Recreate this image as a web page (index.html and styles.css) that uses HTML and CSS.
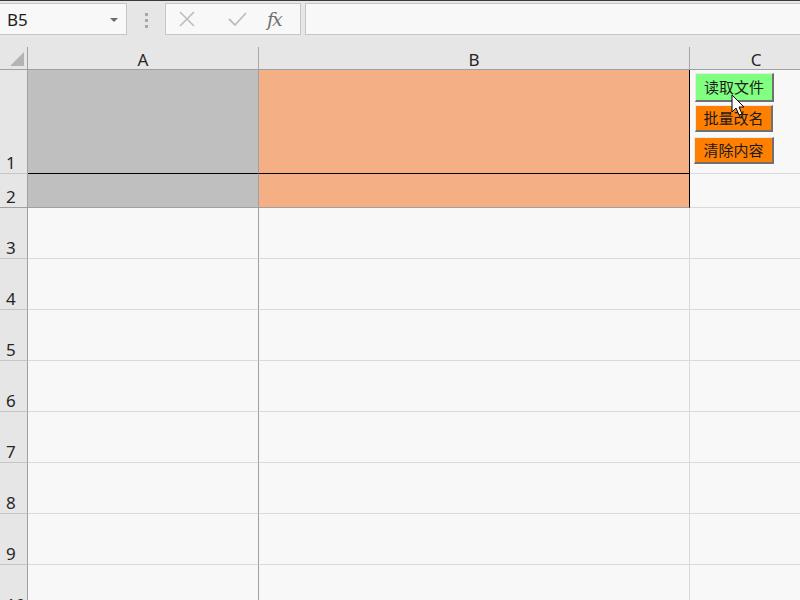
FILE: index.html
```
<!DOCTYPE html>
<html>
<head>
<meta charset="utf-8">
<link rel="stylesheet" href="styles.css">
</head>
<body>
<div class="app">
  <div class="fbar">
    <div class="namebox"><span class="ref">B5</span><span class="dd"></span></div>
    <div class="grip"><i></i><i></i><i></i></div>
    <div class="fbtns">
      <svg class="ic" width="20" height="20" viewBox="0 0 20 20"><path d="M3 3L17 17M17 3L3 17" stroke="#bdbdbd" stroke-width="1.6" fill="none"/></svg>
      <svg class="ic" width="20" height="20" viewBox="0 0 20 20"><path d="M2 10L8 16L19 4" stroke="#bdbdbd" stroke-width="1.8" fill="none"/></svg>
      <span class="fx">fx</span>
    </div>
    <div class="finput"></div>
  </div>
  <div class="sheet">
    <div class="corner"><span class="tri"></span></div>
    <div class="ch">A</div>
    <div class="ch">B</div>
    <div class="ch last">C</div>

    <div class="rh">1</div>
    <div class="c fa b1">&nbsp;</div>
    <div class="c fb b1 br1"></div>
    <div class="c"></div>

    <div class="rh dk">2</div>
    <div class="c fa b2"></div>
    <div class="c fb b2 br1"></div>
    <div class="c"></div>

    <div class="rh">3</div><div class="c ca"></div><div class="c"></div><div class="c"></div>
    <div class="rh">4</div><div class="c ca"></div><div class="c"></div><div class="c"></div>
    <div class="rh">5</div><div class="c ca"></div><div class="c"></div><div class="c"></div>
    <div class="rh">6</div><div class="c ca"></div><div class="c"></div><div class="c"></div>
    <div class="rh">7</div><div class="c ca"></div><div class="c"></div><div class="c"></div>
    <div class="rh">8</div><div class="c ca"></div><div class="c"></div><div class="c"></div>
    <div class="rh">9</div><div class="c ca"></div><div class="c"></div><div class="c"></div>
    <div class="rh">10</div><div class="c ca"></div><div class="c"></div><div class="c"></div>

    <div class="shapes">
      <div class="btn green">读取文件</div>
      <div class="btn orange b2nd">批量改名</div>
      <div class="btn orange b3rd">清除内容</div>
    </div>
    <svg class="cursor" width="16" height="24" viewBox="0 0 16 24"><path d="M1 1L1 18L5 14L8 21L11 20L8 13L13 13Z" fill="#fff" stroke="#000" stroke-width="1"/></svg>
  </div>
</div>
</body>
</html>
```
FILE: styles.css
```
html, body { margin: 0; padding: 0; }
body {
  width: 800px; height: 600px; overflow: hidden;
  background: #e6e6e6;
  font-family: "Noto Sans", "Noto Sans CJK SC", sans-serif;
}
.app { width: 800px; height: 600px; overflow: hidden; border-top: 1px solid #3a3a3a; box-sizing: border-box; }
.fbar {
  height: 46px; box-sizing: border-box; padding-top: 2px;
  display: flex; align-items: flex-start;
}
.namebox {
  width: 127px; height: 32px; box-sizing: border-box;
  background: #f8f8f8; border: 1px solid #c6c6c6; border-left: none;
  display: flex; align-items: center; justify-content: space-between;
  padding: 0 8px 0 7px;
}
.ref { font-size: 17px; color: #1e1e1e; }
.dd { width: 0; height: 0; border-left: 4px solid transparent; border-right: 4px solid transparent; border-top: 4px solid #6a6a6a; margin-top: 2px; }
.grip { width: 38px; display: flex; flex-direction: column; align-items: center; gap: 3px; padding-top: 10px; }
.grip i { display: block; width: 3px; height: 3px; background: #a8a8a8; }
.fbtns {
  width: 136px; height: 32px; box-sizing: border-box;
  background: #f8f8f8; border: 1px solid #c6c6c6;
  display: flex; align-items: center; padding-left: 11px; gap: 30px;
}
.fx { font-family: "DejaVu Serif", "Liberation Serif", serif; font-style: italic; font-size: 19px; color: #707070; margin-left: -10px; letter-spacing: -2px; }
.finput {
  flex: 1; margin-left: 4px; height: 32px; box-sizing: border-box;
  background: #f8f8f8; border: 1px solid #c6c6c6; border-right: none;
}
.sheet {
  position: relative;
  display: grid;
  grid-template-columns: 28px 231px 431px 132px;
  grid-template-rows: 23px 104px 34px repeat(8, 51px);
}
.sheet > div { box-sizing: border-box; }
.corner { border-right: 1px solid #a0a0a0; border-bottom: 1px solid #a0a0a0; position: relative; }
.tri { position: absolute; left: 10px; top: 5px; width: 0; height: 0; border-left: 14px solid transparent; border-bottom: 14px solid #b4b4b4; }
.ch {
  border-right: 1px solid #a6a6a6; border-bottom: 1px solid #a0a0a0;
  text-align: center; font-size: 17px; line-height: 22px; color: #262626;
  padding-top: 2px;
}
.ch.last { border-right: none; }
.rh {
  background: #e6e6e6;
  border-right: 1px solid #a0a0a0; border-bottom: 1px solid #c6c6c6;
  font-size: 17px; color: #262626; line-height: 20px;
  display: flex; align-items: flex-end; padding-left: 6px; padding-bottom: 0;
}
.rh.dk { border-bottom-color: #a0a0a0; }
.c { background: #f8f8f8; border-right: 1px solid #dadada; border-bottom: 1px solid #dadada; }
.ca { border-right-color: #a0a0a0; }
.fa { background: #bfbfbf; border-right: 1px solid #a0a0a0; }
.fb { background: #f4b084; }
.b1 { border-bottom: 1px solid #000; }
.b2 { border-bottom: 1px solid #a0a0a0; }
.br1 { border-right: 1px solid #000; }
.shapes { position: absolute; left: 694px; top: 25px; width: 100px; height: 100px; }
.btn {
  position: absolute; box-sizing: border-box;
  font-family: "Noto Sans CJK SC", sans-serif; font-size: 15px; color: #1a1a1a;
  text-align: center; letter-spacing: 0px;
  border-top: 1px solid #e8e8e8; border-left: 1px solid #e8e8e8;
  border-right: 2px solid #707070; border-bottom: 2px solid #707070;
}
.green { background: #80ff80; left: 1px; top: 1px; width: 79px; height: 29px; line-height: 26px; }
.orange { background: #ff8000; }
.b2nd { left: 1px; top: 33px; width: 78px; height: 27px; line-height: 24px; }
.b3rd { left: 0px; top: 65px; width: 80px; height: 27px; line-height: 24px; }
.cursor { position: absolute; left: 731px; top: 47px; }
```
